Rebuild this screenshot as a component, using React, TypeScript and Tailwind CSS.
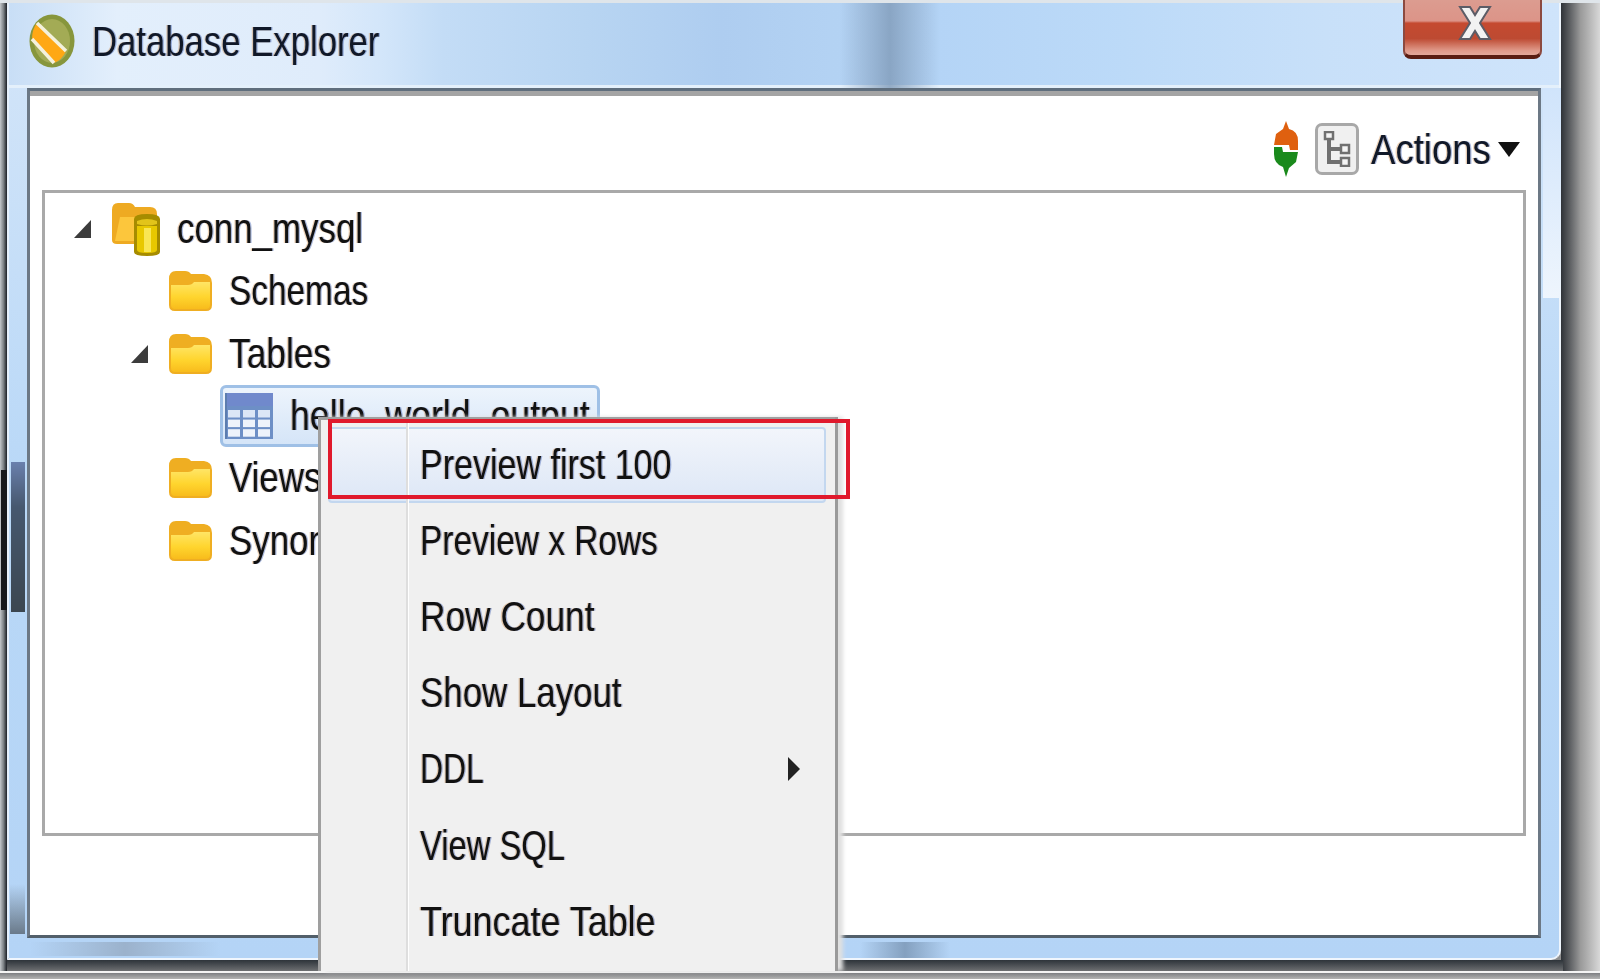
import React from "react";

function Folder() {
  return (
    <svg width="45" height="42" viewBox="0 0 45 42" className="shrink-0">
      <defs>
        <linearGradient id="folderBody" x1="0" y1="0" x2="0" y2="1">
          <stop offset="0" stopColor="#ffe566" />
          <stop offset="0.55" stopColor="#ffd52e" />
          <stop offset="1" stopColor="#f8bc1c" />
        </linearGradient>
      </defs>
      <path d="M1 9 Q1 1 8 1 H17 Q21 1 23 4 H36 Q44 5 44 13 V35 Q44 41 38 41 H7 Q1 41 1 35 Z" fill="#efae22" />
      <path d="M3 15 H20 Q24 15 26 12 H42 V35 Q42 39 38 39 H7 Q3 39 3 35 Z" fill="url(#folderBody)" />
    </svg>
  );
}

function ConnIcon() {
  return (
    <svg width="50" height="55" viewBox="0 0 50 55" className="shrink-0">
      <path d="M1 8 Q1 1 7 1 H18 Q22 1 24 5 H39 Q46 5 46 12 V38 Q46 42 42 42 H6 Q1 42 1 38 Z" fill="#eeaa22" />
      <path d="M9 15 H38 L33 39 H4 Z" fill="#fcc63c" />
      <path d="M23 17 Q23 12 36 12 Q49 12 49 17 V50 Q49 54 36 54 Q23 54 23 50 Z" fill="#a68c00" />
      <path d="M26 24 H46 V48 Q46 51 36 51 Q26 51 26 48 Z" fill="#e8c800" />
      <path d="M26 19 Q36 15 46 19 V22 Q36 25 26 22 Z" fill="#e2c41a" />
      <rect x="33" y="26" width="7" height="24" fill="#fff070" opacity="0.75" />
    </svg>
  );
}

function TableIcon() {
  const cells = [0, 1, 2];
  return (
    <svg width="48" height="46" viewBox="0 0 48 46" className="shrink-0">
      <rect width="48" height="46" fill="#6d8fc6" />
      <rect x="0" y="0" width="48" height="13" fill="#7089cc" />
      <rect x="0" y="0" width="2" height="46" fill="#5d7dae" />
      {cells.map((r) =>
        cells.map((c) => (
          <rect key={`${r}${c}`} x={3 + c * 15} y={17 + r * 9.6} width="12" height="7.5" fill={r === 0 ? "#dbe6f6" : "#eef3fb"} />
        ))
      )}
    </svg>
  );
}

function Expander() {
  return (
    <svg width="19" height="20" viewBox="0 0 19 20" className="shrink-0">
      <path d="M18 1 V19 H1 Z" fill="#3c3c3c" />
    </svg>
  );
}

type RowProps = {
  label: string;
  icon: React.ReactNode;
  pad: string;
  squeeze: string;
  expanded?: boolean;
};

function TreeRow({ label, icon, pad, squeeze, expanded }: RowProps) {
  return (
    <div className={`flex h-[62.3px] items-center ${pad}`}>
      <div className="flex w-[38px] shrink-0 items-center">{expanded && <Expander />}</div>
      {icon}
      <span className={`ml-[16px] origin-left whitespace-nowrap text-[42px] leading-none text-[#111] ${squeeze}`}>{label}</span>
    </div>
  );
}

const menuItems = [
  { label: "Preview first 100", squeeze: "scale-x-[0.81]" },
  { label: "Preview x Rows", squeeze: "scale-x-[0.796]" },
  { label: "Row Count", squeeze: "scale-x-[0.84]" },
  { label: "Show Layout", squeeze: "scale-x-[0.83]" },
  { label: "DDL", squeeze: "scale-x-[0.76]" },
  { label: "View SQL", squeeze: "scale-x-[0.78]" },
  { label: "Truncate Table", squeeze: "scale-x-[0.855]" },
];

export default function App() {
  return (
    <div className="relative flex h-[979px] w-[1600px] flex-col overflow-hidden bg-[#8e8e8e] font-['Liberation_Sans',sans-serif] blur-[0.7px] [text-shadow:1.5px_0_0_rgba(20,60,160,0.35),-1.5px_0_0_rgba(200,110,20,0.3)]">
      <div className="flex h-[971px] shrink-0">
        <div className="w-[7px] shrink-0 bg-gradient-to-r from-[#c4c8cc] via-[#7d8286] to-[#1d2127]" />

        <div className="flex h-[960px] w-[1554px] shrink-0 flex-col rounded-br-[10px] border-b-[2px] border-l-[2px] border-r-[2px] border-b-[#f0f6fd] border-l-[#e6f0fb] border-r-[#eef5fd] bg-gradient-to-b from-[#d5e6f9] via-[#b9d8f7] to-[#b4d4f6] pb-[20px] pl-[18px] pr-[18px]">
          <div className="-ml-[18px] -mr-[18px] flex h-[88px] shrink-0 items-start border-b-[3px] border-b-[#e4f0fb] bg-[linear-gradient(90deg,#c8def6_0%,#e3effc_7%,#dfecfb_20%,#d3e6fa_24%,#c3dcf6_28%,#b8d5f2_37%,#aecdf0_46%,#b3d2f3_53%,#b4d4f6_60%,#bcdaf8_72%,#c8e0f9_85%,#cfe4fb_100%)] pl-[20px]">
            <svg width="46" height="54" viewBox="0 0 46 54" className="mt-[14px] shrink-0">
              <ellipse cx="23" cy="27" rx="22.5" ry="26.5" fill="#87963c" />
              <ellipse cx="23" cy="27" rx="18" ry="22" fill="#a3ab55" />
              <path d="M8 9 L37 37 Q33 46 25 49 L3 25 Q3 15 8 9 Z" fill="#ffa814" />
              <path d="M8 9 L37 37 M3 25 L25 49" stroke="#f4f1dc" strokeWidth="3.5" fill="none" />
            </svg>
            <span className="ml-[17px] mt-[21px] origin-left scale-x-[0.826] whitespace-nowrap text-[42px] leading-none text-[#101828]">Database Explorer</span>
          </div>

          <div className="relative flex flex-1 flex-col border-x-[3px] border-y-[3px] border-x-[#6c7885] border-b-[#525f6a] border-t-[#5f6e7d] bg-white">
            <div className="h-[5px] shrink-0 bg-[#a4a4a4]" />
            <div className="flex h-[94px] shrink-0 items-center justify-end pr-[18px] pt-[12px]">
              <svg width="26" height="56" viewBox="0 0 26 56" className="shrink-0">
                <path d="M13 0 L16 8 Q25 10 25 20 V29 H17 L16 24 H8 L1 24 L3 13 L10 8 Z" fill="#df600f" />
                <path d="M13 56 L10 46 Q1 43 1 33 V26 H9 L10 31 H17 L25 31 L23 41 L16 47 Z" fill="#1a8a1c" />
              </svg>
              <div className="ml-[16px] flex h-[52px] w-[44px] shrink-0 items-center justify-center rounded-[7px] border-[3px] border-[#a8a8a8] bg-[#f0f0f0]">
                <svg width="30" height="36" viewBox="0 0 30 36">
                  <path d="M7 6 V31 H20 M7 18 H20" stroke="#707070" strokeWidth="4" fill="none" />
                  <rect x="3" y="1" width="8" height="7" fill="#f4f4f4" stroke="#707070" strokeWidth="2.5" />
                  <rect x="19" y="14" width="8" height="8" fill="#f4f4f4" stroke="#707070" strokeWidth="2.5" />
                  <rect x="19" y="27" width="8" height="8" fill="#f4f4f4" stroke="#707070" strokeWidth="2.5" />
                </svg>
              </div>
              <div className="ml-[12px] w-[120px] shrink-0">
                <span className="block origin-left scale-x-[0.85] whitespace-nowrap text-[43px] leading-none text-[#101828]">Actions</span>
              </div>
              <svg width="22" height="15" viewBox="0 0 22 15" className="ml-[7px] shrink-0">
                <path d="M0 0 H22 L11 15 Z" fill="#111" />
              </svg>
            </div>

            <div className="ml-[12px] mr-[12px] flex h-[646px] shrink-0 flex-col border-[3px] border-[#a9a9a9] bg-white pt-[5px]">
              <TreeRow label="conn_mysql" icon={<ConnIcon />} pad="pl-[28px]" squeeze="scale-x-[0.83]" expanded />
              <TreeRow label="Schemas" icon={<Folder />} pad="pl-[85px]" squeeze="scale-x-[0.795]" />
              <TreeRow label="Tables" icon={<Folder />} pad="pl-[85px]" squeeze="scale-x-[0.84]" expanded />
              <div className="flex h-[62.3px] items-center pl-[175px]">
                <div className="flex h-[62px] w-[380px] items-center rounded-[6px] border-[3px] border-[#9fc0e6] bg-gradient-to-b from-[#edf4fc] to-[#d5e5f8] pl-[2px]">
                  <TableIcon />
                  <span className="ml-[17px] origin-left scale-x-[0.85] whitespace-nowrap text-[42px] leading-none text-[#111]">hello_world_output</span>
                </div>
              </div>
              <TreeRow label="Views" icon={<Folder />} pad="pl-[85px]" squeeze="scale-x-[0.83]" />
              <TreeRow label="Synonyms" icon={<Folder />} pad="pl-[85px]" squeeze="scale-x-[0.83]" />
            </div>
          </div>
        </div>

        <div className="flex-1 bg-gradient-to-r from-[#2f3338] via-[#9a9a9a] to-[#d8d8d8]" />
      </div>

      <div className="h-[2px] shrink-0 bg-[#f4f4f4]" />
      <div className="flex-1 bg-gradient-to-b from-[#7d7f82] to-[#b4b4b4]" />

      {/* glass streaks and reflections on the frame */}
      <div className="absolute left-0 top-0 h-[3px] w-[1600px] bg-[#dfe5ea]" />
      <div className="absolute left-[840px] top-[3px] h-[85px] w-[100px] bg-gradient-to-r from-transparent via-[#7f9ab8]/80 to-transparent" />
      <div className="absolute left-[1px] top-[470px] h-[140px] w-[6px] bg-[#15181c]" />
      <div className="absolute left-[11px] top-[462px] h-[150px] w-[14px] bg-gradient-to-b from-[#6a80ad] via-[#46586f] via-30% to-[#3b4650]" />
      <div className="absolute left-[10px] top-[884px] h-[50px] w-[15px] bg-gradient-to-b from-transparent to-[#6a7a8a]" />
      <div className="absolute left-[1543px] top-[88px] h-[210px] w-[18px] bg-gradient-to-b from-[#d0e4fb] to-[#eef5fd]" />
      <div className="absolute left-[30px] top-[942px] h-[14px] w-[190px] bg-gradient-to-r from-transparent via-[#8a9bb0]/60 to-transparent" />
      <div className="absolute left-[860px] top-[942px] h-[16px] w-[90px] bg-gradient-to-r from-transparent via-[#6f8aa8]/70 to-transparent" />
      <div className="absolute left-[7px] top-[960px] h-[11px] w-[1556px] bg-gradient-to-b from-[#2e343a] to-[#6e7072]" />

      {/* close button */}
      <div className="absolute left-[1403px] top-0 flex h-[59px] w-[139px] items-start justify-center rounded-b-[8px] border-x-[2px] border-b-[4px] border-x-[#8c4a40] border-b-[#5a1d12] bg-[linear-gradient(180deg,#dc9c90_0%,#dc9488_38%,#c54a30_42%,#bd4a32_70%,#e09a8a_92%,#e4a89a_100%)]">
        <svg width="34" height="36" viewBox="0 0 34 36" className="ml-[4px] mt-[5px]">
          <path d="M2 2 H12 L17 10 L22 2 H32 L22 18 L32 34 H22 L17 26 L12 34 H2 L12 18 Z" fill="#f2f2f2" stroke="#5c5c66" strokeWidth="2" />
        </svg>
      </div>

      {/* context menu */}
      <div className="absolute left-[318px] top-[417px] flex h-[554px] w-[517px] flex-col border-l-[3px] border-t-[3px] border-l-[#9f9f9f] border-t-[#a0a0a0] bg-[#f0f0f0] pt-[7px] shadow-[3px_0_0_#9a9a9a,8px_0_4px_#e0e0e0]">
        {menuItems.map((item, i) => (
          <div
            key={item.label}
            className={`relative flex h-[76.1px] shrink-0 items-center pl-[99px] text-[42px] leading-none text-[#111] ${
              i === 0 ? "ml-[7px] mr-[9px] rounded-[4px] border-[2px] border-[#c3d7ef] bg-gradient-to-b from-[#f2f5fb] to-[#dde7f6] !pl-[90px]" : ""
            }`}
          >
            <span className={`origin-left whitespace-nowrap ${item.squeeze}`}>{item.label}</span>
            {item.label === "DDL" && (
              <svg width="12" height="24" viewBox="0 0 12 24" className="absolute right-[35px] top-[26px]">
                <path d="M0 0 L12 12 L0 24 Z" fill="#222" />
              </svg>
            )}
          </div>
        ))}
        <div className="absolute bottom-0 left-[85px] top-0 w-[3px] border-l-[2px] border-l-[#dedede] bg-white" />
      </div>

      {/* red annotation box */}
      <div className="absolute left-[328px] top-[419px] h-[80px] w-[522px] border-[4px] border-[#e0192c]" />
    </div>
  );
}
